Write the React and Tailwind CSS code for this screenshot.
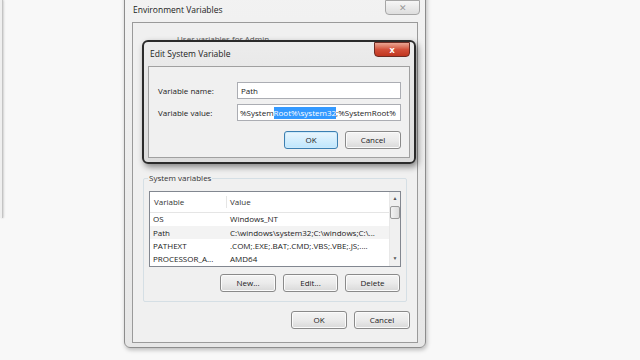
import React from 'react'

function Btn({ children, className = '', def = false }) {
  return (
    <div
      className={
        'flex items-center justify-center rounded-[3px] border text-[8px] text-[#1a1a1a] ' +
        (def
          ? 'border-[#3c7fb1] bg-gradient-to-b from-[#eaf6fd] to-[#bee6fd] shadow-[inset_0_0_0_1px_#cdeafb] '
          : 'border-[#8a8a8a] bg-gradient-to-b from-[#f4f4f4] via-[#ebebeb] to-[#d9d9d9] shadow-[inset_0_0_0_1px_#fbfbfb] ') +
        className
      }
    >
      {children}
    </div>
  )
}

const rows = [
  ['OS', 'Windows_NT'],
  ['Path', 'C:\\windows\\system32;C:\\windows;C:\\...'],
  ['PATHEXT', '.COM;.EXE;.BAT;.CMD;.VBS;.VBE;.JS;....'],
  ['PROCESSOR_A...', 'AMD64'],
]

export default function App() {
  return (
    <div className="relative w-[640px] h-[360px] overflow-hidden bg-[#f8f8f8] font-['Open_Sans',sans-serif] text-[#1a1a1a]">
      {/* edge of a window behind */}
      <div className="absolute left-0 top-0 w-[3px] h-[218px] border-r border-[#c4c4c4] bg-[#efefef] shadow-[1px_0_2px_rgba(0,0,0,0.15)]" />

      {/* Environment Variables window */}
      <div className="absolute left-[124px] top-[-10px] w-[302px] h-[358px] flex flex-col rounded-[6px] border border-[#8c8c8c] bg-gradient-to-b from-[#f2f2f2] to-[#e6e6e6] shadow-[1px_2px_4px_rgba(0,0,0,0.25)]">
        <div className="relative h-[31px] flex items-end pl-[8px] pb-[5px]">
          <span className="text-[8.5px] text-[#222]">Environment Variables</span>
          <div className="absolute right-[5px] top-[9px] w-[35px] h-[15px] rounded-b-[4px] border border-[#a6a6a6] bg-gradient-to-b from-[#f6f6f6] to-[#dedede] flex items-center justify-center text-[9px] text-[#999]">
            ✕
          </div>
        </div>
        <div className="flex-1 mx-[7px] mb-[4px] border border-[#9a9a9a] bg-[#f0f0f0] flex flex-col px-[10px]">
          {/* user variables group (mostly under the dialog) */}
          <div className="h-[155px] pt-[12px] pl-[34px]">
            <span className="block text-[8px] leading-[8px] text-[#555]">User variables for Admin</span>
          </div>

          {/* system variables group */}
          <div className="relative border border-[#d5dfe5] rounded-[2px] h-[124px] px-[5px] pt-[12px]">
            <span className="absolute -top-[7px] left-[4px] px-[1px] bg-[#f0f0f0] text-[8px] text-[#333]">System variables</span>
            <div className="relative h-[76px] border border-[#828790] bg-white flex">
              <div className="flex-1 flex flex-col">
                <div className="h-[21px] flex items-center border-b border-[#e5e5e5] text-[8px] text-[#333]">
                  <span className="w-[76px] pl-[4px]">Variable</span>
                  <span className="border-l border-[#e5e5e5] pl-[3px]">Value</span>
                </div>
                {rows.map(([k, v], i) => (
                  <div
                    key={k}
                    className={'h-[13.5px] flex items-center text-[8px] whitespace-nowrap ' + (i === 1 ? 'bg-[#f3f3f3]' : '')}
                  >
                    <span className="w-[76px] pl-[3px]">{k}</span>
                    <span className="pl-[4px]">{v}</span>
                  </div>
                ))}
              </div>
              <div className="w-[11px] bg-[#f0f0f0] border-l border-[#e8e8e8] flex flex-col items-center">
                <div className="h-[14px] flex items-center text-[5px] text-[#555]">▲</div>
                <div className="w-[10px] h-[13px] rounded-[2px] border border-[#9a9a9a] bg-gradient-to-r from-[#f3f3f3] to-[#dcdcdc]" />
                <div className="flex-1" />
                <div className="h-[14px] flex items-center text-[5px] text-[#555]">▼</div>
              </div>
            </div>
            <div className="flex justify-end gap-[7px] mt-[7px] pr-[1px]">
              <Btn className="w-[56px] h-[18px]">New...</Btn>
              <Btn className="w-[55px] h-[18px]">Edit...</Btn>
              <Btn className="w-[55px] h-[18px]">Delete</Btn>
            </div>
          </div>

          <div className="flex justify-end gap-[7px] mt-[9px] -mr-[3px]">
            <Btn className="w-[56px] h-[18px]">OK</Btn>
            <Btn className="w-[56px] h-[18px]">Cancel</Btn>
          </div>
        </div>
      </div>

      {/* Edit System Variable dialog */}
      <div className="absolute left-[142px] top-[40px] w-[274px] h-[124px] rounded-[6px] border-[2px] border-[#2b2b2b] bg-gradient-to-b from-[#ececec] to-[#dcdcdc] shadow-[2px_3px_6px_rgba(0,0,0,0.45)] flex flex-col">
        <div className="relative h-[24px] flex items-center pl-[6px] pt-[1px]">
          <span className="text-[8.5px] text-[#222]">Edit System Variable</span>
          <div className="absolute right-[4px] top-0 w-[36px] h-[15px] rounded-b-[4px] border border-[#6d2b23] bg-gradient-to-b from-[#e8a593] via-[#d2503a] to-[#c0351f] flex items-center justify-center text-[9px] font-bold text-white">
            x
          </div>
        </div>
        <div className="flex-1 mx-[4px] mb-[4px] border border-[#a0a0a0] bg-[#f0f0f0] flex flex-col pl-[9px] pr-[8px] pt-[15px]">
          <div className="flex items-center h-[17px]">
            <span className="w-[79px] text-[8px]">Variable name:</span>
            <div className="flex-1 h-[17px] border border-[#abadb3] bg-white flex items-center pl-[3px] text-[8px]">Path</div>
          </div>
          <div className="flex items-center h-[17px] mt-[5px]">
            <span className="w-[79px] text-[8px]">Variable value:</span>
            <div className="flex-1 min-w-0 h-[17px] border border-[#abadb3] bg-white flex items-center pl-[2px] text-[8px] whitespace-nowrap overflow-hidden">
              <span>%System</span>
              <span className="bg-[#3399ff] text-white">Root%\system32</span>
              <span>;%SystemRoot%</span>
            </div>
          </div>
          <div className="flex justify-end gap-[7px] mt-[10px]">
            <Btn def className="w-[54px] h-[18px]">OK</Btn>
            <Btn className="w-[56px] h-[18px]">Cancel</Btn>
          </div>
        </div>
      </div>
    </div>
  )
}
